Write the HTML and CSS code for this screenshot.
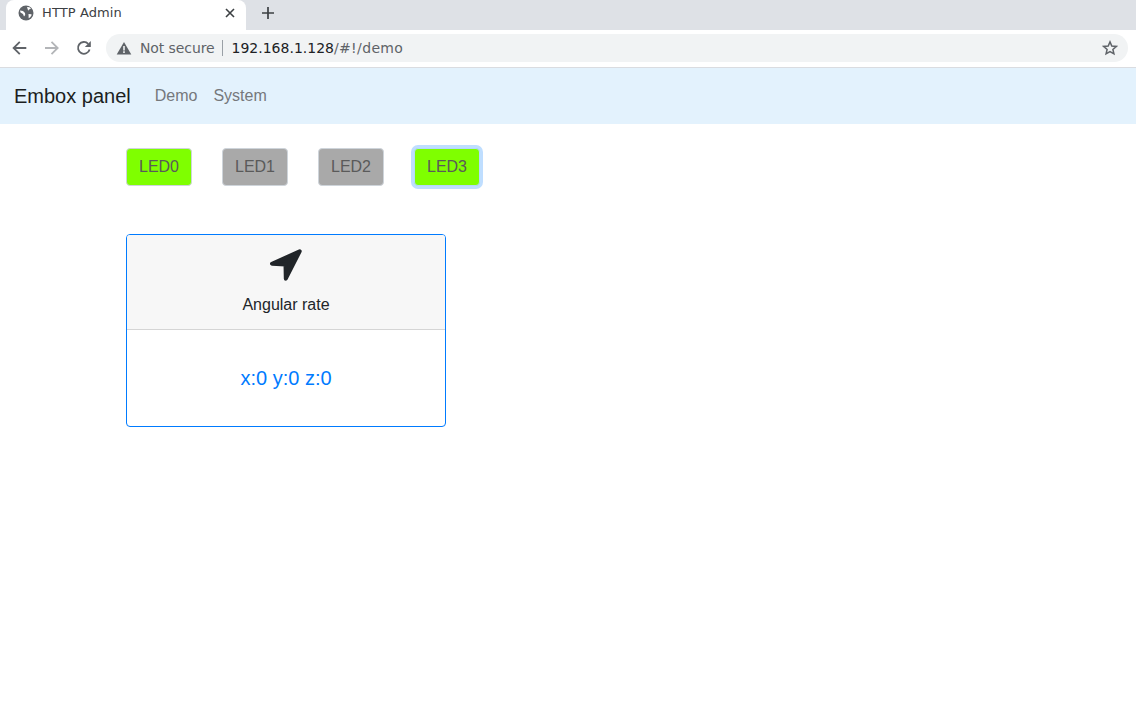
FILE: index.html
```html
<!DOCTYPE html>
<html lang="en">
<head>
<meta charset="utf-8">
<title>HTTP Admin</title>
<link rel="stylesheet" href="styles.css">
</head>
<body>
<div class="tabstrip">
  <div class="tab">
    <svg class="globe" width="16" height="16" viewBox="0 0 16 16"><circle cx="8" cy="8" r="7.500" fill="#5f6368"/><path d="M2 5.500l3 .5 2 2 .2 2-1.200 1.500L5 9 2.500 7.500zM9 2l2.500.3 1.500 1.500-2 .8-.8 1.200zM10.500 9l2.800.2.4.8-1.500 2.300-1.500 1-.1-2.300z" fill="#fff"/></svg>
    <span class="tab-title">HTTP Admin</span>
    <svg class="tab-close" width="10" height="10" viewBox="0 0 10 10"><path d="M1 1l8 8M9 1l-8 8" stroke="#3c4043" stroke-width="1.600"/></svg>
  </div>
  <svg class="newtab" width="12" height="12" viewBox="0 0 12 12"><path d="M6 0v12M0 6h12" stroke="#3c4043" stroke-width="1.700"/></svg>
</div>
<div class="toolbar">
  <svg class="nav-icon" width="16" height="16" viewBox="0 0 16 16"><path d="M14.300 8H1.800M7.800 1.800L1.600 8l6.200 6.200" fill="none" stroke="#5f6368" stroke-width="1.800"/></svg>
  <svg class="nav-icon" width="16" height="16" viewBox="0 0 16 16"><path d="M1 8h12.500M7.500 1.800L13.700 8l-6.200 6.200" fill="none" stroke="#b3b5b8" stroke-width="1.800"/></svg>
  <svg class="nav-icon" width="16" height="16" viewBox="0 0 16 16"><path d="M13.600 9.500A5.900 5.900 0 1 1 12.200 3.800" fill="none" stroke="#5f6368" stroke-width="1.800"/><path d="M14.800 1v6h-6z" fill="#5f6368"/></svg>
  <div class="omnibox">
    <svg class="warn" width="16" height="14" viewBox="0 0 16 14"><path d="M8 1L15.300 13.500H.7z" fill="#5f6368"/><path d="M7.200 5h1.600v4.400H7.200zM7.200 10.300h1.600v1.600H7.200z" fill="#f1f3f4"/></svg>
    <span class="not-secure">Not secure</span>
    <span class="url-sep"></span>
    <span class="url"><span class="url-host">192.168.1.128</span>/#!/demo</span>
    <svg class="star" width="16" height="16" viewBox="0 0 16 16"><path d="M8 1.900l1.800 4.100 4.500.4-3.400 3 1 4.400L8 11.500l-3.900 2.300 1-4.400-3.400-3 4.500-.4z" fill="none" stroke="#5f6368" stroke-width="1.500"/></svg>
  </div>
</div>
<nav class="navbar">
  <span class="brand">Embox panel</span>
  <a class="nav-link">Demo</a>
  <a class="nav-link">System</a>
</nav>
<main class="content">
  <div class="leds">
    <button class="led led-on">LED0</button>
    <button class="led led-off">LED1</button>
    <button class="led led-off">LED2</button>
    <button class="led led-on led-focus">LED3</button>
  </div>
  <section class="card">
    <header class="card-header">
      <svg class="card-icon" width="32" height="32" viewBox="0 0 32 32"><path d="M29.700 2.300L2 14.800 15.500 15.500 15.800 29.700z" fill="#212529" stroke="#212529" stroke-width="4" stroke-linejoin="round"/></svg>
      <div class="card-title">Angular rate</div>
    </header>
    <div class="card-body">x:0 y:0 z:0</div>
  </section>
</main>
</body>
</html>
```
FILE: styles.css
```css
* { box-sizing: border-box; }
html, body { margin: 0; padding: 0; height: 100%; overflow: hidden; background: #fff; }
body { font-family: "Liberation Sans", Arial, sans-serif; font-size: 16px; color: #212529; }

.tabstrip { height: 30px; background: #dee1e6; display: flex; align-items: flex-start; padding-left: 6px; }
.tab { width: 240px; height: 30px; background: #fff; border-radius: 8px 8px 0 0; display: flex; align-items: flex-start; padding: 5px 11px 0 12px; }
.globe { flex: none; }
.tab-title { font: 13px/15px "DejaVu Sans", sans-serif; letter-spacing: .1px; color: #3c4043; margin-left: 8px; flex: 1; }
.tab-close { flex: none; margin-top: 3px; }
.newtab { margin: 7px 0 0 16px; }

.toolbar { height: 38px; background: #fff; border-bottom: 1px solid #dadce0; display: flex; align-items: center; padding: 0 0 1px 12px; }
.nav-icon { flex: none; margin-right: 16px; }
.omnibox { flex: 1; height: 28px; margin: 0 8px 0 -2px; background: #f1f3f4; border-radius: 14px; display: flex; align-items: center; padding: 0 10px; font: 14px "DejaVu Sans", sans-serif; }
.warn { flex: none; }
.not-secure { color: #5f6368; margin-left: 8px; letter-spacing: -.1px; }
.url-sep { width: 1px; height: 16px; background: #9aa0a6; margin: 0 9px 0 7px; }
.url { color: #5f6368; flex: 1; letter-spacing: .35px; }
.url-host { color: #202124; letter-spacing: 0; }

.navbar { height: 56px; background: #e3f2fd; display: flex; align-items: center; padding: 0 14px; }
.brand { font-size: 20px; margin-right: 24px; color: #1b1e21; }
.nav-link { color: #75787b; margin-right: 16px; }

.content { padding: 24px 0 0 126px; }
.leds { display: flex; gap: 30px; }
.led { width: 66px; height: 38px; border: 1px solid #ced4da; border-radius: 4px; font: 16px "Liberation Sans", Arial, sans-serif; color: #5a5a5a; padding: 0; }
.led-on { background: #7fff00; }
.led-off { background: #a9a9a9; }
.led-focus { box-shadow: 0 0 0 3px #bfdeff; border-color: #b4d8fd; }

.card { width: 320px; margin-top: 48px; border: 1px solid #007bff; border-radius: 4px; overflow: hidden; text-align: center; }
.card-header { height: 95px; background: #f7f7f7; border-bottom: 1px solid #d5d5d5; padding-top: 14px; }
.card-icon { display: block; margin: 0 auto; }
.card-title { margin-top: 12px; line-height: 24px; }
.card-body { height: 96px; display: flex; align-items: center; justify-content: center; color: #007bff; font-size: 20px; }
```
